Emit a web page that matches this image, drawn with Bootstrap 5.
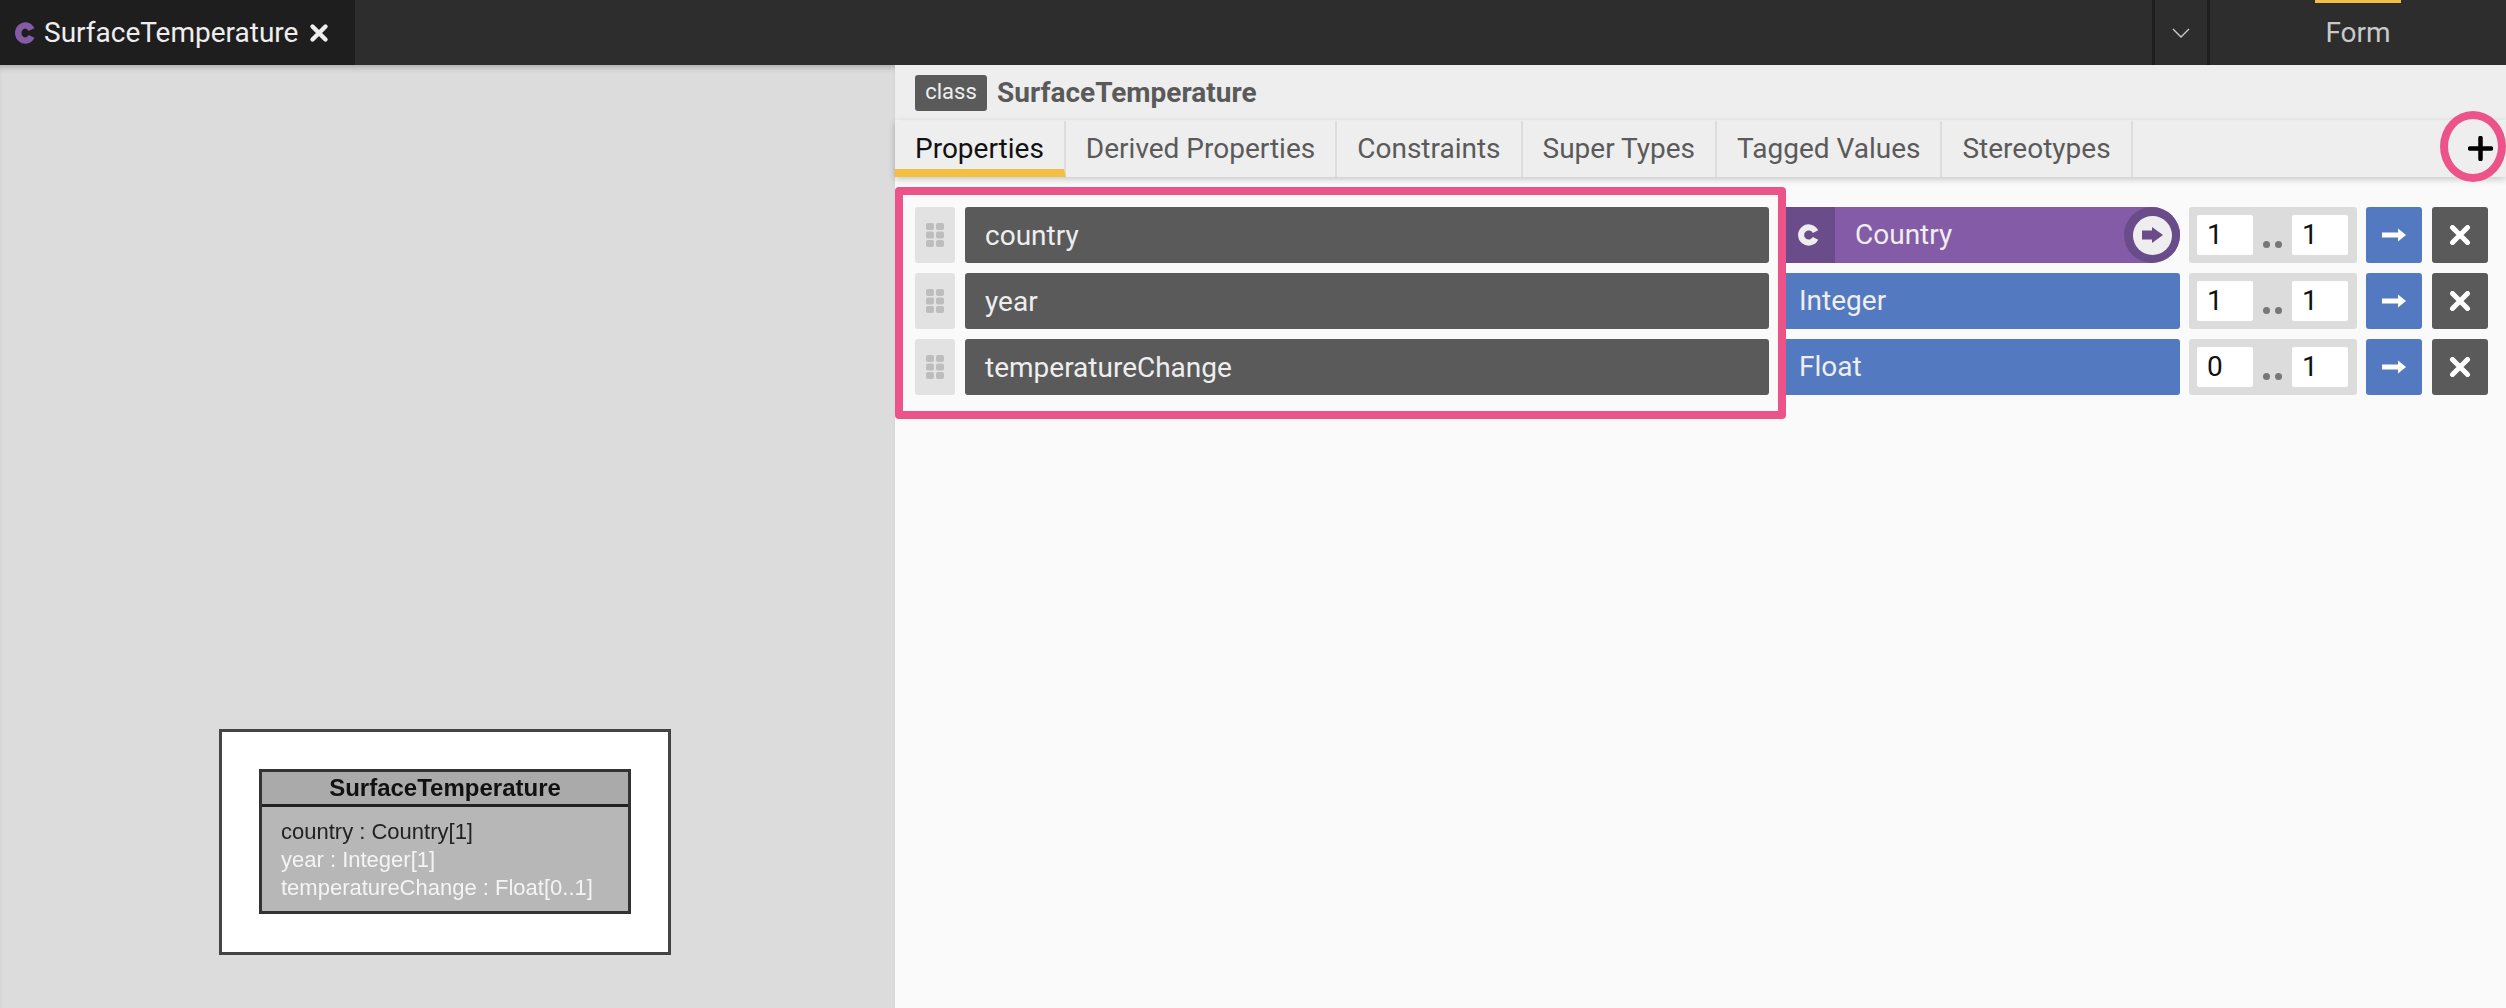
<!DOCTYPE html>
<html lang="en">
<head>
<meta charset="utf-8">
<title>SurfaceTemperature</title>
<link href="https://cdn.jsdelivr.net/npm/bootstrap@5.3.0/dist/css/bootstrap.min.css" rel="stylesheet">
<style>
html,body{height:100%;margin:0}
body{font-family:Roboto,"Liberation Sans",sans-serif;font-size:28px;background:#fafafa;overflow:hidden}
.topbar{height:65px;background:#2d2d2d;position:relative;z-index:3}
.tab-active{width:355px;background:#1e1e1e;color:#eee;padding-left:15px}
.tab-active>svg:first-child{width:20px;height:22px;margin-right:9px}
.tab-title{width:253px;white-space:nowrap}
.tab-x{width:20px;height:20px;margin-left:12px}
.chev-box{width:58px;border-left:3px solid #1e1e1e;border-right:3px solid #1e1e1e;margin-left:auto}
.form-tab{width:296px;color:#c9c9c9;position:relative}
.form-bar{position:absolute;top:0;left:105px;width:86px;height:3px;background:#f2bf42}
.left-pane{width:895px;background:#dcdcdc;position:relative;box-shadow:inset 0 6px 6px -4px rgba(0,0,0,.25)}
.dia-frame{position:absolute;left:219px;top:664px;width:452px;height:226px;background:#fff;border:3px solid #444;filter:blur(.7px)}
.dia-class{position:absolute;left:37px;top:37px;width:372px;height:145px;background:#b7b7b7;border:3px solid #333;font-family:"Liberation Sans",Arial,sans-serif}
.dia-head{height:35px;background:#aaa;border-bottom:3px solid #222;font-weight:700;font-size:24px;line-height:32px;color:#111;text-align:center}
.dia-body{padding:11px 0 0 19px;font-size:22px;line-height:28px;color:#f4f4f4;white-space:nowrap}
.dia-dark{color:#222}
.right-pane{position:relative;min-width:0}
.head-row{height:55px;background:#eee;padding-left:20px;gap:10px}
.kind-tag{width:72px;height:36px;background:#5a5a5a;color:#eee;border-radius:3px;font-size:22px;line-height:34px;text-align:center}
.head-name{font-weight:700;color:#5a5a5a;font-size:28px}
.tab-row{height:56px;background:#eee;margin-top:1px;box-shadow:0 2px 7px rgba(0,0,0,.22);color:#5a5a5a;position:relative}
.ptab{padding:0 20px;border-right:2px solid #ddd;height:56px;line-height:56px;white-space:nowrap}
.ptab-on{color:#111;border-bottom:8px solid #f2bf42}
.rows{padding:30px 18px 0 20px;gap:10px}
.prow{height:56px}
.grip{width:40px;background:#e2e2e2;border-radius:3px;margin-right:10px}
.grip svg{width:18px;height:24px}
.pname{width:804px;background:#5a5a5a;color:#eee;border-radius:3px;padding:1px 0 0 20px;margin-right:17px}
.ptype{flex:1 1 auto;color:#eee;border-radius:0 3px 3px 0;margin-right:9px}
.ptype-blue{background:#537ac0;padding-left:13px}
.ptype-class{background:#845ba6;border-radius:0 28px 28px 0;position:relative}
.c-block{width:49px;height:56px;background:#6b4c8a;padding-right:6px}
.c-block svg{width:22px;height:22px}
.c-name{padding-left:20px}
.go-ring{position:absolute;right:0;top:0;width:56px;height:56px;border-radius:50%;background:#6b4c8a}
.go-ring span{width:39px;height:39px;border-radius:50%;background:#eee}
.go-ring svg{width:23px;height:18px}
.mult{width:168px;background:#dcdcdc;border-radius:3px;padding:8px;margin-right:9px}
.mult-val{width:56px;height:40px;background:#fff;border-radius:2px;color:#111;padding-left:10px;line-height:40px}
.mult-dots{width:39px;gap:5px;padding-top:26px}
.mult-dots i{width:7px;height:7px;border-radius:50%;background:#777}
.act{width:56px;border-radius:3px}
.act svg{width:26px;height:20px}
.act-blue{background:#537ac0;margin-right:10px}
.act-dark{background:#5a5a5a}
.mark-rect{position:absolute;left:0;top:122px;width:891px;height:232px;border:8px solid #ec5489;border-radius:4px;pointer-events:none}
.mark-circle{position:absolute;right:0;top:46px;width:66px;height:71px;border:8px solid #ec5489;border-radius:50%;pointer-events:none;z-index:2}
.plus-icon{position:absolute;left:1573px;top:71px;width:25px;height:25px;z-index:2}
</style>
</head>
<body class="d-flex flex-column">
<div class="topbar d-flex flex-shrink-0">
  <div class="tab-active d-flex align-items-center">
    <svg viewBox="0 0 20 22"><path d="M16.5 7.6A7 7.6 0 1 0 16.5 14.4" fill="none" stroke="#845ba6" stroke-width="6.4"/></svg>
    <span class="tab-title">SurfaceTemperature</span>
    <svg class="tab-x" viewBox="0 0 20 20"><path d="M3.5 3.5L16.5 16.5M16.5 3.5L3.5 16.5" stroke="#eee" stroke-width="4.4" stroke-linecap="round" fill="none"/></svg>
  </div>
  <div class="chev-box d-flex align-items-center justify-content-center">
    <svg width="18" height="10" viewBox="0 0 18 10"><path d="M1 1L9 9L17 1" fill="none" stroke="#c9c9c9" stroke-width="1.4"/></svg>
  </div>
  <div class="form-tab d-flex align-items-center justify-content-center"><span class="form-bar"></span><span>Form</span></div>
</div>
<div class="d-flex flex-grow-1">
  <div class="left-pane flex-shrink-0">
    <div class="dia-frame">
      <div class="dia-class">
        <div class="dia-head">SurfaceTemperature</div>
        <div class="dia-body"><div class="dia-dark">country : Country[1]</div><div>year : Integer[1]</div><div>temperatureChange : Float[0..1]</div></div>
      </div>
    </div>
  </div>
  <div class="right-pane flex-grow-1 d-flex flex-column">
    <div class="head-row d-flex align-items-center">
      <span class="kind-tag">class</span><span class="head-name">SurfaceTemperature</span>
    </div>
    <div class="tab-row d-flex">
      <div class="ptab ptab-on">Properties</div>
      <div class="ptab">Derived Properties</div>
      <div class="ptab">Constraints</div>
      <div class="ptab">Super Types</div>
      <div class="ptab">Tagged Values</div>
      <div class="ptab">Stereotypes</div>
    </div>
    <div class="rows d-flex flex-column">
      <div class="prow d-flex">
        <div class="grip d-flex align-items-center justify-content-center"><svg viewBox="0 0 18 24"><g fill="#bdbdbd"><rect width="8" height="7" rx="2"/><rect x="10" width="8" height="7" rx="2"/><rect y="8.5" width="8" height="7" rx="2"/><rect x="10" y="8.5" width="8" height="7" rx="2"/><rect y="17" width="8" height="7" rx="2"/><rect x="10" y="17" width="8" height="7" rx="2"/></g></svg></div>
        <div class="pname d-flex align-items-center">country</div>
        <div class="ptype ptype-class d-flex align-items-center">
          <span class="c-block d-flex align-items-center justify-content-center"><svg viewBox="0 0 22 22"><path d="M18.5 7.6A7.6 7.6 0 1 0 18.5 14.4" fill="none" stroke="#eee" stroke-width="6"/></svg></span>
          <span class="c-name">Country</span>
          <span class="go-ring d-flex align-items-center justify-content-center"><span class="d-flex align-items-center justify-content-center"><svg viewBox="0 0 23 18"><path d="M1 4.5H11V1L22 9L11 17V13.5H1Z" fill="#6b4c8a"/></svg></span></span>
        </div>
        <div class="mult d-flex"><span class="mult-val">1</span><span class="mult-dots d-flex justify-content-center"><i></i><i></i></span><span class="mult-val">1</span></div>
        <div class="act act-blue d-flex align-items-center justify-content-center"><svg viewBox="0 0 26 20"><path d="M1 7.5H17V3.5L25 10L17 16.5V12.5H1Z" fill="#fff"/></svg></div>
        <div class="act act-dark d-flex align-items-center justify-content-center"><svg viewBox="0 0 26 20"><path d="M5.5 2.5L20.5 17.5M20.5 2.5L5.5 17.5" stroke="#fff" stroke-width="5" stroke-linecap="round" fill="none"/></svg></div>
      </div>
      <div class="prow d-flex">
        <div class="grip d-flex align-items-center justify-content-center"><svg viewBox="0 0 18 24"><g fill="#bdbdbd"><rect width="8" height="7" rx="2"/><rect x="10" width="8" height="7" rx="2"/><rect y="8.5" width="8" height="7" rx="2"/><rect x="10" y="8.5" width="8" height="7" rx="2"/><rect y="17" width="8" height="7" rx="2"/><rect x="10" y="17" width="8" height="7" rx="2"/></g></svg></div>
        <div class="pname d-flex align-items-center">year</div>
        <div class="ptype ptype-blue d-flex align-items-center">Integer</div>
        <div class="mult d-flex"><span class="mult-val">1</span><span class="mult-dots d-flex justify-content-center"><i></i><i></i></span><span class="mult-val">1</span></div>
        <div class="act act-blue d-flex align-items-center justify-content-center"><svg viewBox="0 0 26 20"><path d="M1 7.5H17V3.5L25 10L17 16.5V12.5H1Z" fill="#fff"/></svg></div>
        <div class="act act-dark d-flex align-items-center justify-content-center"><svg viewBox="0 0 26 20"><path d="M5.5 2.5L20.5 17.5M20.5 2.5L5.5 17.5" stroke="#fff" stroke-width="5" stroke-linecap="round" fill="none"/></svg></div>
      </div>
      <div class="prow d-flex">
        <div class="grip d-flex align-items-center justify-content-center"><svg viewBox="0 0 18 24"><g fill="#bdbdbd"><rect width="8" height="7" rx="2"/><rect x="10" width="8" height="7" rx="2"/><rect y="8.5" width="8" height="7" rx="2"/><rect x="10" y="8.5" width="8" height="7" rx="2"/><rect y="17" width="8" height="7" rx="2"/><rect x="10" y="17" width="8" height="7" rx="2"/></g></svg></div>
        <div class="pname d-flex align-items-center">temperatureChange</div>
        <div class="ptype ptype-blue d-flex align-items-center">Float</div>
        <div class="mult d-flex"><span class="mult-val">0</span><span class="mult-dots d-flex justify-content-center"><i></i><i></i></span><span class="mult-val">1</span></div>
        <div class="act act-blue d-flex align-items-center justify-content-center"><svg viewBox="0 0 26 20"><path d="M1 7.5H17V3.5L25 10L17 16.5V12.5H1Z" fill="#fff"/></svg></div>
        <div class="act act-dark d-flex align-items-center justify-content-center"><svg viewBox="0 0 26 20"><path d="M5.5 2.5L20.5 17.5M20.5 2.5L5.5 17.5" stroke="#fff" stroke-width="5" stroke-linecap="round" fill="none"/></svg></div>
      </div>
    </div>
    <div class="mark-rect"></div>
    <div class="mark-circle"></div>
    <svg class="plus-icon" viewBox="0 0 25 25"><path d="M12.5 2V23M2 12.5H23" stroke="#000" stroke-width="4.5" stroke-linecap="round" fill="none"/></svg>
  </div>
</div>
<script src="https://cdn.jsdelivr.net/npm/bootstrap@5.3.0/dist/js/bootstrap.bundle.min.js"></script>
</body>
</html>
